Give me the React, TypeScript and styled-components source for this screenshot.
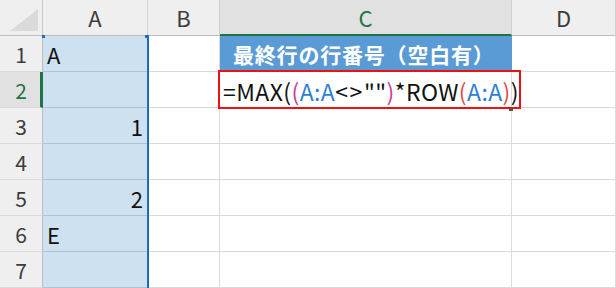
import React from "react";
import styled, { createGlobalStyle } from "styled-components";

const Global = createGlobalStyle`
  html, body { margin: 0; padding: 0; background: #ffffff; }
  body { font-family: "Noto Sans CJK JP", "Noto Sans", sans-serif; }
`;

const COLS = "43px 105px 72px 292px 104px";

const Sheet = styled.div`
  position: relative;
  width: 616px;
  height: 288px;
  overflow: hidden;
  display: grid;
  grid-template-columns: ${COLS};
  grid-template-rows: 36px repeat(7, 36px);
`;

const Corner = styled.div`
  box-sizing: border-box;
  background: #efefef;
  border-right: 1px solid #c8c8c8;
  border-bottom: 1px solid #bdbdbd;
  position: relative;
  display: flex;
  align-items: flex-end;
  justify-content: flex-end;
  padding: 0 4px 4px 0;
`;

const Triangle = styled.div`
  width: 0;
  height: 0;
  border-left: 28px solid transparent;
  border-bottom: 22px solid #dadada;
`;

const ColHead = styled.div<{ $active?: boolean }>`
  box-sizing: border-box;
  background: ${(p) => (p.$active ? "#e1e1e1" : "#efefef")};
  border-right: 1px solid #d0d0d0;
  border-bottom: ${(p) => (p.$active ? "2px solid #217346" : "1px solid #bdbdbd")};
  color: ${(p) => (p.$active ? "#217346" : "#3c3c3c")};
  font-size: 22px;
  display: flex;
  align-items: center;
  justify-content: center;
  padding-bottom: ${(p) => (p.$active ? "0" : "1px")};
`;

const RowHead = styled.div<{ $active?: boolean }>`
  box-sizing: border-box;
  background: ${(p) => (p.$active ? "#e1e1e1" : "#efefef")};
  border-right: ${(p) => (p.$active ? "3px solid #217346" : "1px solid #bdbdbd")};
  border-bottom: 1px solid #d8d8d8;
  color: ${(p) => (p.$active ? "#217346" : "#3c3c3c")};
  font-size: 21px;
  display: flex;
  align-items: center;
  justify-content: center;
  padding-left: ${(p) => (p.$active ? "2px" : "0")};
`;

const Cell = styled.div<{ $sel?: boolean; $align?: "left" | "right"; $fill?: boolean; $over?: boolean }>`
  box-sizing: border-box;
  background: ${(p) => (p.$fill ? "#5b9bd5" : p.$sel ? "#cde1f1" : "#ffffff")};
  border-right: 1px solid ${(p) => (p.$sel ? "#cde1f1" : p.$fill ? "#5b9bd5" : "#dadada")};
  border-bottom: 1px solid ${(p) => (p.$sel ? "#aec4d6" : p.$fill ? "#5b9bd5" : "#dadada")};
  color: #111;
  font-size: 22px;
  display: flex;
  align-items: center;
  justify-content: ${(p) => (p.$align === "right" ? "flex-end" : "flex-start")};
  padding: 0 4px 0 4px;
  white-space: nowrap;
  position: ${(p) => (p.$over ? "relative" : "static")};
  z-index: ${(p) => (p.$over ? 1 : "auto")};
`;

const Title = styled.span`
  color: #ffffff;
  font-weight: 700;
  font-size: 21px;
  padding-left: 9px;
  letter-spacing: 0.8px;
`;

const Formula = styled.span`
  font-size: 23px;
  color: #111;
  margin-top: 3px;
  margin-left: -1px;
  letter-spacing: 0.4px;
`;

const Tok = styled.span<{ $c: string; $wide?: boolean }>`
  color: ${(p) => p.$c};
  letter-spacing: ${(p) => (p.$wide ? "1.6px" : "inherit")};
`;

const Selection = styled.div`
  position: absolute;
  left: 43px;
  top: 35px;
  width: 106px;
  bottom: 0;
  border-right: 2px solid #1f6cb6;
  box-sizing: border-box;
  pointer-events: none;
`;

const Handle = styled.div<{ $x: number; $w: number }>`
  position: absolute;
  left: ${(p) => p.$x}px;
  top: 35px;
  width: ${(p) => p.$w}px;
  height: 3px;
  background: #1f6cb6;
`;

const RedBox = styled.div`
  position: absolute;
  left: 218px;
  top: 70px;
  width: 303px;
  height: 39px;
  border: 2px solid #ee1111;
  box-sizing: border-box;
  z-index: 2;
`;

const FillHandle = styled.div`
  position: absolute;
  left: 509px;
  top: 107px;
  width: 4px;
  height: 4px;
  background: #3f5f4c;
  z-index: 1;
`;

const BLUE = "#2f7fd8";
const PINK = "#c94096";
const RED = "#e0504a";
const BLACK = "#111";

const rows: { a?: string; align?: "left" | "right" }[] = [
  { a: "A", align: "left" },
  {},
  { a: "1", align: "right" },
  {},
  { a: "2", align: "right" },
  { a: "E", align: "left" },
  {},
];

export default function App() {
  return (
    <>
      <Global />
      <Sheet>
        <Corner>
          <Triangle />
        </Corner>
        <ColHead>A</ColHead>
        <ColHead>B</ColHead>
        <ColHead $active>C</ColHead>
        <ColHead>D</ColHead>
        {rows.map((r, i) => {
          const n = i + 1;
          return (
            <React.Fragment key={n}>
              <RowHead $active={n === 2}>{n}</RowHead>
              <Cell $sel $align={r.align}>{r.a}</Cell>
              <Cell />
              {n === 1 ? (
                <Cell $fill>
                  <Title>最終行の行番号（空白有）</Title>
                </Cell>
              ) : n === 2 ? (
                <Cell $over>
                  <Formula>
                    <Tok $c={BLACK}>=MAX(</Tok>
                    <Tok $c={PINK}>(</Tok>
                    <Tok $c={BLUE}>A:A</Tok>
                    <Tok $c={BLACK} $wide>&lt;&gt;</Tok>
                    <Tok $c={BLACK}>""</Tok>
                    <Tok $c={PINK}>)</Tok>
                    <Tok $c={BLACK}>*ROW</Tok>
                    <Tok $c={RED}>(</Tok>
                    <Tok $c={BLUE}>A:A</Tok>
                    <Tok $c={RED}>)</Tok>
                    <Tok $c={BLACK}>)</Tok>
                  </Formula>
                </Cell>
              ) : (
                <Cell />
              )}
              <Cell />
            </React.Fragment>
          );
        })}
        <Selection />
        <Handle $x={42} $w={3} />
        <Handle $x={145} $w={4} />
        <RedBox />
        <FillHandle />
      </Sheet>
    </>
  );
}
